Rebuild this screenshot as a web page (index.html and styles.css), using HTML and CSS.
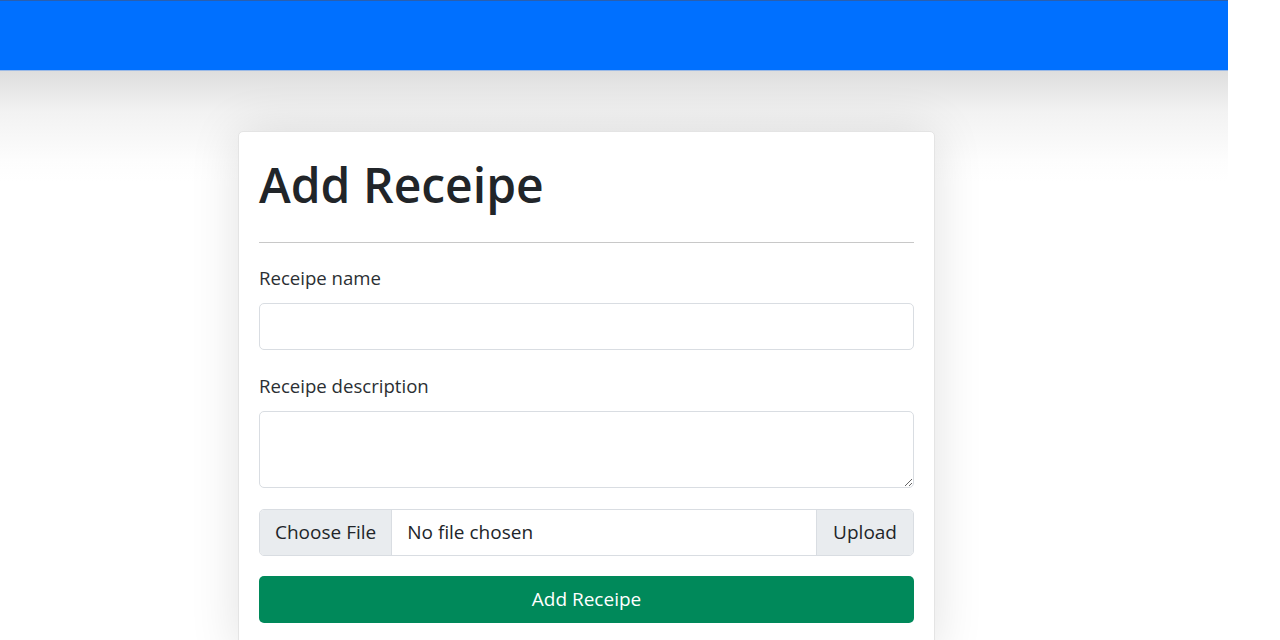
FILE: index.html
```html
<!DOCTYPE html>
<html lang="en">
<head>
    <meta charset="UTF-8">
    <meta name="viewport" content="width=device-width, initial-scale=1.0">
    <title>Add Receipe</title>
    <link rel="stylesheet" href="styles.css">
</head>
<body>
    <div class="page">
        <nav class="navbar"></nav>

        <main class="main">
            <div class="recipe-card">
                <h1 class="card-title">Add Receipe</h1>
                <hr class="divider">

                <form class="recipe-form">
                    <div class="form-group">
                        <label class="form-label" for="name">Receipe name</label>
                        <input class="form-control" type="text" id="name">
                    </div>

                    <div class="form-group form-group-last">
                        <label class="form-label" for="desc">Receipe description</label>
                        <textarea class="form-control form-textarea" id="desc"></textarea>
                    </div>

                    <div class="input-group">
                        <span class="file-button">Choose File</span>
                        <span class="file-name">No file chosen</span>
                        <span class="upload-button">Upload</span>
                    </div>

                    <button type="button" class="submit-button">Add Receipe</button>
                </form>
            </div>
        </main>
    </div>
</body>
</html>
```

FILE: styles.css
```css
* {
    margin: 0;
    padding: 0;
    box-sizing: border-box;
    font-family: 'Open Sans', 'Noto Sans', Arial, sans-serif;
}

body {
    background-color: #fff;
    color: #212529;
    height: 640px;
    overflow: hidden;
}

.page {
    width: 1228px;
}

.navbar {
    height: 71px;
    background-color: #0070ff;
    border-top: 1px solid #2a5fae;
    border-bottom: 1px solid #9ab9e6;
}

.main {
    height: 569px;
    padding: 60px 0 0 238px;
    background: linear-gradient(to bottom, #dedede 0, #f2f2f2 40px, #fdfdfd 90px, #fff 110px);
}

.recipe-card {
    width: 697px;
    background: white;
    border: 1px solid #e4e4e4;
    border-radius: 5px;
    padding: 20px 20px 30px;
    box-shadow: 0 0 50px rgba(0, 0, 0, 0.12);
}

.card-title {
    font-size: 48px;
    font-weight: 600;
    line-height: 1.2;
    margin-top: 4px;
}

.divider {
    border: none;
    border-top: 1px solid #c8c8c8;
    margin: 28px 0 22px;
}

.form-label {
    display: block;
    font-size: 18.6px;
    line-height: 26px;
    margin-bottom: 12px;
    color: #2b2f33;
}

.form-group {
    margin-bottom: 23px;
}

.form-group-last {
    margin-bottom: 21px;
}

.form-control {
    display: block;
    width: 100%;
    height: 47px;
    border: 1px solid #d9dde2;
    border-radius: 5px;
    background: white;
    font-size: 19px;
    padding: 8px 14px;
    outline: none;
}

.form-textarea {
    height: 77px;
    resize: vertical;
}

.input-group {
    display: flex;
    height: 47px;
    border: 1px solid #d9dde2;
    border-radius: 5px;
    overflow: hidden;
    font-size: 19px;
    margin-bottom: 20px;
}

.file-button,
.upload-button,
.file-name {
    display: flex;
    align-items: center;
    padding: 0 15px;
    color: #212529;
}

.file-button {
    background-color: #e9ecef;
    border-right: 1px solid #d9dde2;
}

.file-name {
    flex: 1;
}

.upload-button {
    background-color: #e9ecef;
    border-left: 1px solid #d9dde2;
    padding: 0 16px;
}

.submit-button {
    display: block;
    width: 100%;
    height: 47px;
    background-color: #00895a;
    color: white;
    border: none;
    border-radius: 5px;
    font-size: 19px;
    cursor: pointer;
}
```
